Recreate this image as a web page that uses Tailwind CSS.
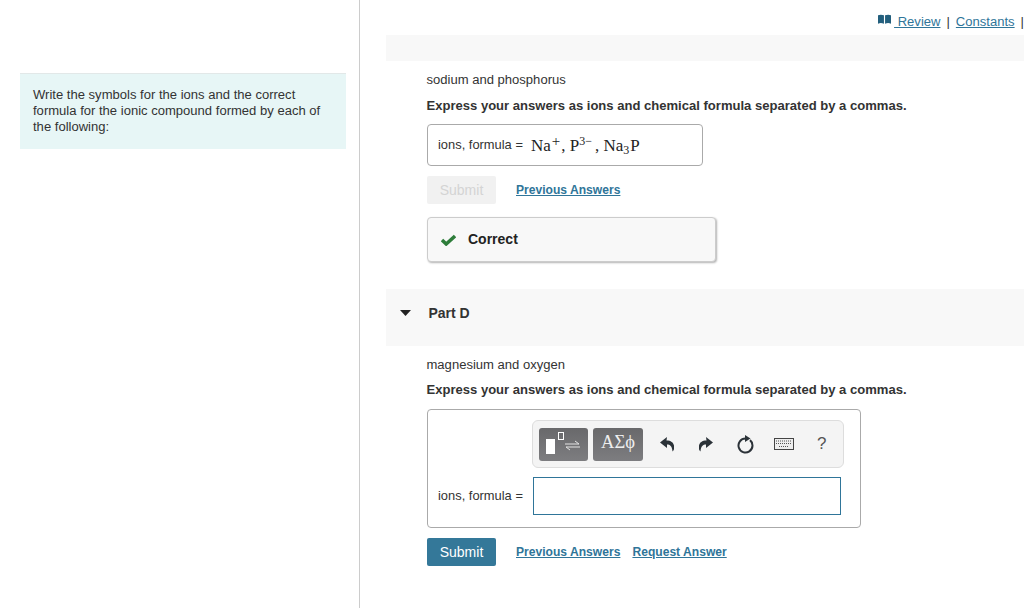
<!DOCTYPE html>
<html lang="en">
<head>
  <meta charset="UTF-8">
  <title>Part D</title>
  <script src="https://cdn.jsdelivr.net/npm/@tailwindcss/browser@4"></script>
</head>
<body class="bg-white overflow-hidden">
  <div class="flex w-[1024px] h-[608px] overflow-hidden font-['Liberation_Sans',Arial,sans-serif] text-[13.05px] text-[#333]">
    <!-- left panel -->
    <aside class="w-[360px] shrink-0 border-r border-[#ccc] pl-5 pr-[13px] pt-[73px]">
      <div class="h-[76px] bg-[#e7f6f6] border-t border-[#e2e8e8] px-[13px] pt-[13px] leading-4">
        Write the symbols for the ions and the correct formula for the ionic compound formed by each of the following:
      </div>
    </aside>

    <!-- right column -->
    <main class="flex-1 min-w-0 pl-[26px]">
      <div class="h-[35px] flex items-end justify-end pb-[5px] gap-[6px] leading-4 whitespace-nowrap">
        <svg class="w-[13px] h-[10px] self-center mt-[8px] -mr-[3px]" viewBox="0 0 14 10"><path fill="#235f7d" d="M0 1q3-1.200 6.400 0v9Q3 8.800 0 10zM7.600 1q3.400-1.200 6.400 0v9q-3-1.200-6.400 0z"/></svg>
        <a href="#" class="text-[#2f7599] underline">&nbsp;Review</a>
        <span>|</span>
        <a href="#" class="text-[#2f7599] underline">Constants</a>
        <span>|</span>
      </div>
      <div class="h-[26px] bg-[#f8f8f8]"></div>

      <div class="pl-[41px]">
        <p class="mt-[11px] -ml-[0.5px] leading-4">sodium and phosphorus</p>
        <p class="mt-[10px] -ml-[0.5px] leading-4 font-bold">Express your answers as ions and chemical formula separated by a commas.</p>
        <div class="mt-[10px] w-[276px] h-[42px] border border-[#aaa] rounded-[4px] flex items-center pl-[10px] gap-[8px]">
          <span class="text-[12.9px]">ions, formula =</span>
          <span class="font-['Liberation_Serif',serif] text-[17px] leading-none text-[#222] whitespace-nowrap">Na<sup class="text-[15px] ml-px top-[-5px]">+</sup><span class="ml-[1px]">,</span> P<sup class="text-[12px]">3−</sup><span class="ml-[3px]">,</span> Na<sub class="text-[12px]">3</sub><span class="ml-[1px]">P</span></span>
        </div>
        <div class="mt-[10px] flex items-center">
          <button class="w-[69px] h-[28px] bg-[#f1f1f1] text-[#d4d4d4] text-[14px] rounded-[2px]">Submit</button>
          <a href="#" class="ml-5 text-[12.1px] font-bold text-[#2f7599] underline">Previous Answers</a>
        </div>
        <div class="mt-[13px] w-[289px] h-[45px] bg-[#f8f8f8] border border-[#ccc] rounded-[4px] shadow-[1px_1px_2px_rgba(0,0,0,0.3)] flex items-center pl-[13px] gap-[12px]">
          <svg class="w-[15px] h-[12px]" viewBox="0 0 15 12"><path fill="none" stroke="#2e7d3a" stroke-width="3.500" d="M1 6l4.200 4L14 2"/></svg>
          <span class="font-bold text-[14px] text-[#222]">Correct</span>
        </div>
      </div>

      <div class="mt-[27px] h-[57px] bg-[#f8f8f8] flex items-center pl-[14px] pb-[9px]">
        <svg class="w-[11px] h-[6px]" viewBox="0 0 11 6"><path fill="#222" d="M0 0h11L5.500 6z"/></svg>
        <span class="ml-[17.500px] font-bold text-[14px]">Part D</span>
      </div>

      <div class="pl-[41px]">
        <p class="mt-[11px] -ml-[0.5px] leading-4">magnesium and oxygen</p>
        <p class="mt-[9px] -ml-[0.5px] leading-4 font-bold">Express your answers as ions and chemical formula separated by a commas.</p>
        <div class="mt-[11px] w-[434px] h-[119px] border border-[#aaa] rounded-[4px] pt-[10px] pl-[10px]">
          <div class="ml-[94px] w-[312px] h-[48px] bg-[#f4f4f4] border border-[#ddd] rounded-[6px] flex items-center pl-[6px]">
            <div class="w-[49px] h-[33px] rounded-[3px] bg-gradient-to-b from-[#69696b] to-[#7d7d80] relative">
              <span class="absolute left-[7px] top-[11px] w-[9px] h-[15px] bg-white"></span>
              <span class="absolute left-[19px] top-[4px] w-[6px] h-[8px] border border-white"></span>
              <svg class="absolute left-[26px] top-[12px] w-[15px] h-[11px]" viewBox="0 0 15 11"><path fill="none" stroke="#e4e4e4" d="M0 4h14L10 1M15 7H1l4 3"/></svg>
            </div>
            <div class="ml-[5px] w-[50px] h-[33px] pb-[2px] rounded-[3px] bg-gradient-to-b from-[#69696b] to-[#7d7d80] text-[#eee] font-['Liberation_Serif',serif] text-[18.500px] flex items-center justify-center">ΑΣϕ</div>
            <svg class="ml-[17px] w-[14px] h-[15px]" viewBox="0 0 14 15"><path fill="#2b3238" d="M7 0L0 5.500 7 11V7.500c3 0 5 1.500 5.500 7 2-2 2-4 1.500-6-.7-3-3-5-7.500-5z"/></svg>
            <svg class="ml-[25px] w-[14px] h-[15px]" viewBox="0 0 14 15"><path fill="#2b3238" d="M7 0l7 5.500L7 11V7.500c-3 0-5 1.500-5.500 7-2-2-2-4-1.500-6 .7-3 3-5 7.500-5z"/></svg>
            <svg class="ml-[24px] w-[17px] h-[19px]" viewBox="0 0 17 19"><path fill="none" stroke="#2b3238" stroke-width="2" d="M8.500 3.500A7 7 0 1 0 13 5.140"/><path fill="#2b3238" d="M8 0v7l5.500-3.500z"/></svg>
            <svg class="ml-[20px] w-[20px] h-[12px]" viewBox="0 0 20 12"><rect x=".5" y=".5" width="19" height="11" fill="#eee" stroke="#444"/><path stroke="#555" stroke-dasharray="1 1" d="M2 3h16M2 5.500h16M5 8.500h10"/></svg>
            <span class="ml-[23px] -mt-[1px] text-[17px] text-[#555]">?</span>
          </div>
          <div class="mt-[9px] flex items-center">
            <span class="text-[12.9px] w-[95px]">ions, formula =</span>
            <div class="w-[308px] h-[38px] border border-[#2f7599]"></div>
          </div>
        </div>
        <div class="mt-[10px] flex items-center">
          <button class="w-[69px] h-[28px] bg-[#347899] text-white text-[14px] rounded-[2px]">Submit</button>
          <a href="#" class="ml-5 text-[12.1px] font-bold text-[#2f7599] underline">Previous Answers</a>
          <a href="#" class="ml-3 text-[12.1px] font-bold text-[#2f7599] underline">Request Answer</a>
        </div>
      </div>
    </main>
  </div>
</body>
</html>
